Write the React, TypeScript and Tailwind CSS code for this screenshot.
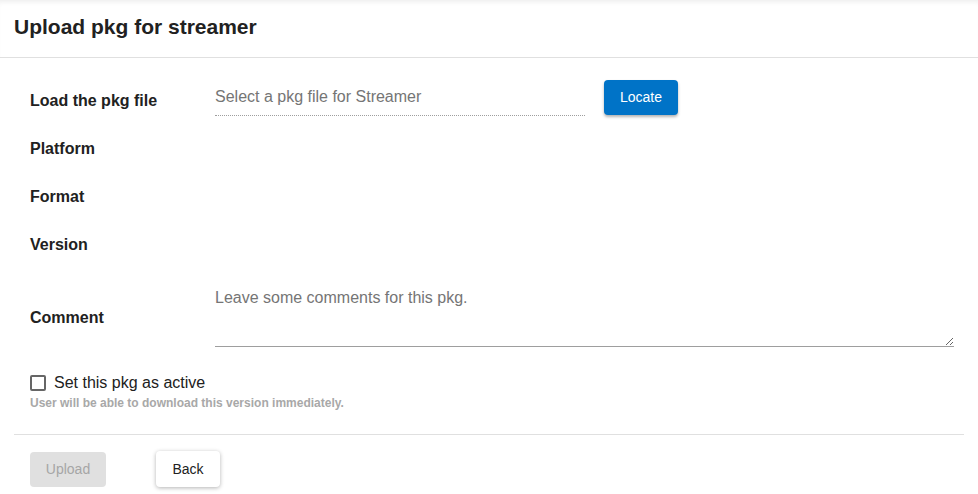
import { useState } from "react";

const LABEL = "w-[185px] shrink-0 text-[16px] font-bold text-[#212121]";

export default function App() {
  const [active, setActive] = useState(false);
  const [comment, setComment] = useState("");

  return (
    <div className="w-[978px] h-[494px] bg-white overflow-hidden font-['Liberation_Sans',Arial,sans-serif] text-[#212121]">
      {/* Header */}
      <div className="h-[58px] flex items-center px-[14px] border-b border-[#e0e0e0] shadow-[inset_0_5px_5px_-3px_rgba(0,0,0,0.07)]">
        <h1 className="text-[21px] font-bold text-[#212121] -mt-[4px]">Upload pkg for streamer</h1>
      </div>

      {/* Form */}
      <div className="pl-[30px] pt-[18px]">
        <div className="flex items-center h-[48px]">
          <div className={LABEL + " mt-[2px]"}>Load the pkg file</div>
          <div className="w-[370px] h-[36px] flex items-center border-b border-dotted border-[#9e9e9e] -mt-[5px]">
            <span className="text-[16px] text-[#757575]">Select a pkg file for Streamer</span>
          </div>
          <button className="ml-[19px] w-[74px] h-[35px] rounded-[4px] bg-[#0073c7] text-white text-[14px] shadow-[0_2px_3px_rgba(0,0,0,0.3)] -mt-[6px]">
            Locate
          </button>
        </div>
        <div className="flex items-center h-[48px]">
          <div className={LABEL + " mt-[2px]"}>Platform</div>
        </div>
        <div className="flex items-center h-[48px]">
          <div className={LABEL + " mt-[2px]"}>Format</div>
        </div>
        <div className="flex items-center h-[48px]">
          <div className={LABEL + " mt-[2px]"}>Version</div>
        </div>

        <div className="flex items-center mt-[16px]">
          <div className={LABEL + " mt-[4px]"}>Comment</div>
          <textarea
            value={comment}
            onChange={(e) => setComment(e.target.value)}
            placeholder="Leave some comments for this pkg."
            className="w-[739px] h-[63px] resize-y bg-transparent border-0 border-b border-[#9e9e9e] outline-none text-[16px] leading-[20px] pt-[4px] placeholder:text-[#757575]"
          />
        </div>

        <label className="flex items-center gap-[8px] mt-[27px] cursor-pointer w-fit">
          <input type="checkbox" checked={active} onChange={(e) => setActive(e.target.checked)} className="sr-only" />
          <span className="w-[16px] h-[16px] border-2 border-[#666] rounded-[2px] bg-white" />
          <span className="text-[16px] text-[#212121] leading-[18px]">Set this pkg as active</span>
        </label>
        <p className="text-[12px] font-bold text-[#a8a8a8] mt-[4px] leading-[14px]">User will be able to download this version immediately.</p>
      </div>

      <div className="mx-[14px] mt-[24px] border-t border-[#e0e0e0]" />

      <div className="flex items-center gap-[50px] pl-[30px] pt-[16px]">
        <button disabled className="w-[76px] h-[35px] rounded-[4px] bg-[#e0e0e0] text-[#a6a6a6] text-[14px]">
          Upload
        </button>
        <button className="w-[64px] h-[36px] rounded-[4px] bg-white text-[#212121] text-[14px] shadow-[0_1px_4px_rgba(0,0,0,0.3)]">
          Back
        </button>
      </div>
    </div>
  );
}
